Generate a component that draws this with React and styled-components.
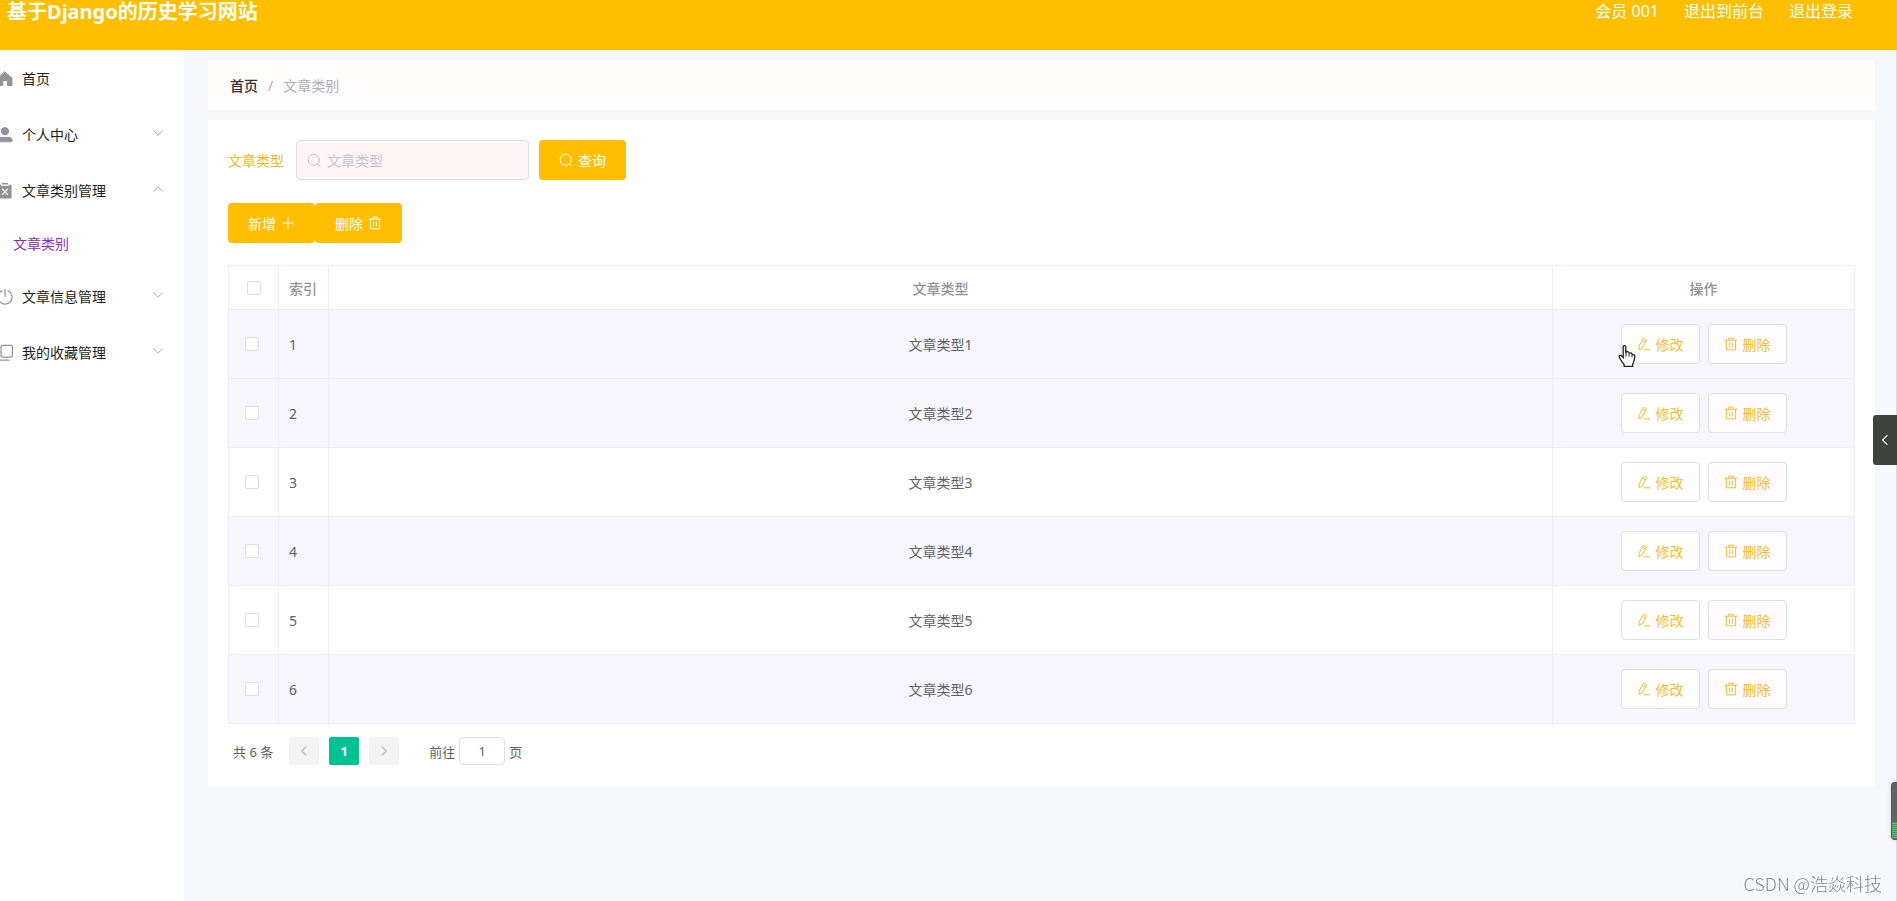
import { useState } from "react";
import styled, { createGlobalStyle } from "styled-components";

const MENU = [
  { label: "首页", icon: "home" },
  { label: "个人中心", icon: "user", arrow: "down" },
  {
    label: "文章类别管理",
    icon: "release",
    arrow: "up",
    children: ["文章类别"],
  },
  { label: "文章信息管理", icon: "power", arrow: "down" },
  { label: "我的收藏管理", icon: "copy", arrow: "down" },
];

const ROWS = [1, 2, 3, 4, 5, 6].map((id) => ({ id, name: `文章类型${id}` }));

const GlobalStyle = createGlobalStyle`
  * {
    box-sizing: border-box;
  }
  body {
    margin: 0;
    background-color: #f6f8fc;
    color: #606266;
    font-size: 14px;
    font-family: "Noto Sans", "Noto Sans CJK SC", sans-serif;
  }
  button,
  input {
    font: inherit;
  }
  a {
    text-decoration: none;
  }
`;

const Page = styled.div`
  min-height: 100vh;
  display: flex;
  flex-direction: column;
`;

const Header = styled.header`
  height: 50px;
  padding: 0 44px 0 7px;
  display: flex;
  justify-content: space-between;
  background-color: #ffbf00;
  color: #fff;
`;

const Title = styled.h1`
  margin: 0;
  font-size: 20px;
  line-height: 24px;
`;

const HeaderNav = styled.nav`
  display: flex;
  gap: 25px;
  font-size: 16px;
  line-height: 22px;
`;

const HeaderLink = styled.a`
  color: #fff;
`;

const Body = styled.div`
  flex: 1;
  display: flex;
  border-right: 1px solid #d9dbe0;
`;

const Sidebar = styled.nav`
  width: 184px;
  flex-shrink: 0;
  overflow: hidden;
  background-color: #fffefe;
`;

const MenuItem = styled.a`
  height: 56px;
  padding-right: 20px;
  display: flex;
  align-items: center;
  color: #1d1d1f;
`;

/* the icons hang over the left edge */
const MenuIcon = styled.span`
  width: 18px;
  height: 18px;
  margin: 2px 8px 0 -4px;
  color: #909399;
`;

const MenuLabel = styled.span`
  flex: 1;
`;

const MenuArrow = styled.span`
  margin-bottom: 3px;
  color: #a6a8ad;
`;

const SubItem = styled.a`
  height: 50px;
  padding-left: 13px;
  display: flex;
  align-items: center;
  color: #8a2bc8;
`;

const Main = styled.main`
  flex: 1;
  min-width: 0;
  padding: 10px 21px 10px 24px;
  display: flex;
  flex-direction: column;
  gap: 10px;
`;

const Breadcrumb = styled.nav`
  height: 50px;
  padding: 0 22px;
  display: flex;
  align-items: center;
  gap: 10px;
  background-color: #fffdfc;
  color: #a8aec0;
`;

const Crumb = styled.a`
  color: #303133;
  font-weight: 500;
`;

const Panel = styled.section`
  padding: 20px 20px 21px;
  background-color: #fff;
`;

const SearchForm = styled.form`
  display: flex;
  align-items: center;
  gap: 10px;
`;

const SearchLabel = styled.label`
  margin-right: 2px;
  color: #f2b91c;
`;

const SearchBox = styled.div`
  width: 233px;
  height: 40px;
  padding: 0 10px;
  display: flex;
  align-items: center;
  gap: 6px;
  border: 1px solid #dcdfe6;
  border-radius: 4px;
  background-color: #fff5f6;
  color: #c0c4cc;
`;

const SearchInput = styled.input`
  flex: 1;
  min-width: 0;
  padding: 0;
  border: none;
  outline: none;
  background: transparent;
  color: #606266;

  &::placeholder {
    color: #c0c4cc;
  }
`;

const Button = styled.button`
  height: 40px;
  width: 87px;
  padding: 0;
  display: inline-flex;
  align-items: center;
  justify-content: center;
  gap: 5px;
  border: none;
  border-radius: 4px;
  background-color: #ffbf00;
  color: #fff;
  cursor: pointer;
`;

const RowButton = styled(Button)`
  width: 79px;
  border: 1px solid #dcdfe6;
  background-color: ${(props) => (props.$danger ? "#fffbfe" : "#fff")};
  color: #f6bd2c;
`;

const Toolbar = styled.div`
  margin: 23px 0 22px;
  display: flex;
`;

const Table = styled.table`
  width: 100%;
  table-layout: fixed;
  border-collapse: collapse;
  border: 1px solid #ebeef5;
`;

const Th = styled.th`
  width: ${(props) => props.$width || "auto"};
  height: 44px;
  padding: 0 10px;
  border: 1px solid #ebeef5;
  color: #909399;
  font-weight: 500;
  text-align: ${(props) => props.$align || "center"};
`;

const Tr = styled.tr`
  background-color: ${(props) => (props.$shaded ? "#f6f6fc" : "#fff")};
`;

const Td = styled.td`
  height: 69px;
  padding: 0 10px;
  border: 1px solid #ebeef5;
  text-align: ${(props) => props.$align || "center"};
`;

const CheckTd = styled(Td)`
  padding: 0 13px 0 10px;
`;

const Checkbox = styled.input`
  appearance: none;
  width: 14px;
  height: 14px;
  display: block;
  margin: 0 auto;
  border: 1px solid #dcdfe6;
  border-radius: 2px;
  background-color: #fff;

  &:checked {
    background-color: #ffbf00;
  }
`;

const Actions = styled.div`
  display: flex;
  justify-content: center;
  gap: 8px;
`;

const Pagination = styled.div`
  padding: 13px 5px 0;
  display: flex;
  align-items: center;
  font-size: 13px;
`;

const Pager = styled.div`
  margin: 0 30px 0 16px;
  display: flex;
  gap: 10px;
`;

const PageButton = styled.button`
  width: 30px;
  height: 28px;
  padding: 0;
  display: flex;
  align-items: center;
  justify-content: center;
  border: none;
  border-radius: 2px;
  background-color: ${(props) => (props.$active ? "#00c292" : "#f4f4f5")};
  color: ${(props) => (props.$active ? "#fff" : "#c0c4cc")};
  font-weight: 700;
`;

const Jump = styled.label`
  display: flex;
  align-items: center;
  gap: 4px;
`;

const JumpInput = styled.input`
  width: 46px;
  height: 28px;
  padding: 0;
  border: 1px solid #dcdfe6;
  border-radius: 4px;
  color: #606266;
  text-align: center;
`;

const DrawerHandle = styled.button`
  position: fixed;
  top: 415px;
  right: 0;
  width: 24px;
  height: 50px;
  padding: 0;
  display: flex;
  align-items: center;
  justify-content: center;
  border: none;
  border-radius: 3px 0 0 3px;
  background-color: #404240;
  color: #fff;
`;

const Meter = styled.div`
  position: fixed;
  top: 782px;
  right: 0;
  width: 6px;
  height: 58px;
  display: flex;
  align-items: flex-end;
  overflow: hidden;
  border: 1px solid #58595a;
  border-right: none;
  border-radius: 4px 0 0 4px;
  background-color: #626364;
  box-shadow: 0 0 4px rgba(0, 0, 0, 0.15);
`;

const MeterFill = styled.div`
  width: 100%;
  height: 17px;
  background: repeating-linear-gradient(#3f9a57 0 1px, #5cc077 1px 2px);
`;

const Watermark = styled.div`
  position: fixed;
  right: 15px;
  bottom: 5px;
  color: #85878a;
  font-size: 18px;
  line-height: 26px;
  font-weight: 300;
  font-family: "Noto Sans CJK SC", sans-serif;
  text-shadow: -1px -1px 0 #fff;
`;

const Pointer = styled.svg`
  position: absolute;
  top: 344px;
  right: 260px;
  width: 20px;
  height: 24px;
  pointer-events: none;
`;

const Svg = styled.svg`
  display: block;
  flex-shrink: 0;
  width: ${(props) => props.$size}px;
  height: ${(props) => props.$size}px;
  fill: none;
  stroke: currentColor;
  stroke-width: ${(props) => props.$weight || 1};
  stroke-linecap: round;
  stroke-linejoin: round;
`;

function Icon({ name, size = 14 }) {
  switch (name) {
    case "home":
      return (
        <Svg viewBox="0 0 18 18" $size={size}>
          <path
            d="M9 2 16 8.2V15.4H11.4V10.6H6.8V15.4H2V8.2Z"
            fill="currentColor"
          />
        </Svg>
      );
    case "user":
      return (
        <Svg viewBox="0 0 18 18" $size={size}>
          <circle cx="9" cy="5.2" r="3.6" fill="currentColor" />
          <path
            d="M2 15.4V14C2 12.2 3.2 11.4 5 11.4H13C14.8 11.4 16 12.4 16 14V15.4Z"
            fill="currentColor"
          />
        </Svg>
      );
    case "release":
      return (
        <Svg viewBox="0 0 18 18" $size={size}>
          <path
            d="M3 3.4H15V16H3ZM6.4 1.6H11.6"
            fill="currentColor"
            strokeWidth="1.2"
          />
          <path d="M5.6 3.4H12.4" stroke="#fff" />
          <path
            d="M6.6 7.2 11.4 12.4M11.4 7.2 6.6 12.4"
            stroke="#fff"
            strokeWidth="1.3"
          />
        </Svg>
      );
    case "power":
      return (
        <Svg viewBox="0 0 18 18" $size={size} $weight={1.2}>
          <path d="M9 1.4V8.4M5.8 2.9A7 7 0 1 0 12.2 2.9" />
        </Svg>
      );
    case "copy":
      return (
        <Svg viewBox="0 0 18 18" $size={size} $weight={1.2}>
          <rect x="5" y="1.4" width="11.4" height="11.8" rx="1.6" />
          <path d="M13 16.2H3.6A1.8 1.8 0 0 1 1.8 14.4V5" />
        </Svg>
      );
    case "search":
      return (
        <Svg viewBox="0 0 14 14" $size={size}>
          <circle cx="6.8" cy="6.8" r="5.6" />
          <path d="M10.8 10.9 12.6 12.8" />
        </Svg>
      );
    case "plus":
      return (
        <Svg viewBox="0 0 14 14" $size={size}>
          <path d="M7 1.4V12.6M1.4 7H12.6" />
        </Svg>
      );
    case "trash":
      return (
        <Svg viewBox="0 0 14 14" $size={size}>
          <path d="M1 3.2H13M4.8 3V1.2H9.2V3M2.4 3.4V12.8H11.6V3.4M5.6 6V10.2M8.4 6V10.2" />
        </Svg>
      );
    case "edit":
      return (
        <Svg viewBox="0 0 14 14" $size={size}>
          <path d="M6.8 1.4 9.6 3 5 11 2 12.6 2 9.6ZM5.6 3.4 8.4 5M7 12.8H12.8" />
        </Svg>
      );
    case "up":
      return (
        <Svg viewBox="0 0 12 12" $size={size}>
          <path d="M1.6 8.2 6 3.8 10.4 8.2" />
        </Svg>
      );
    case "down":
      return (
        <Svg viewBox="0 0 12 12" $size={size}>
          <path d="M1.6 3.8 6 8.2 10.4 3.8" />
        </Svg>
      );
    case "left":
      return (
        <Svg viewBox="0 0 12 12" $size={size} $weight={1.2}>
          <path d="M8 1.6 3.6 6 8 10.4" />
        </Svg>
      );
    case "prev":
      return (
        <Svg viewBox="0 0 12 12" $size={size} $weight={1.6}>
          <path d="M7.8 2 3.8 6 7.8 10" />
        </Svg>
      );
    case "next":
      return (
        <Svg viewBox="0 0 12 12" $size={size} $weight={1.6}>
          <path d="M4.2 2 8.2 6 4.2 10" />
        </Svg>
      );
    default:
      return null;
  }
}

function SideMenu() {
  return (
    <Sidebar>
      {MENU.map((item) => (
        <div key={item.label}>
          <MenuItem href="#">
            <MenuIcon>
              <Icon name={item.icon} size={18} />
            </MenuIcon>
            <MenuLabel>{item.label}</MenuLabel>
            {item.arrow && (
              <MenuArrow>
                <Icon name={item.arrow} size={12} />
              </MenuArrow>
            )}
          </MenuItem>
          {item.children &&
            item.children.map((child) => (
              <SubItem key={child} href="#">
                {child}
              </SubItem>
            ))}
        </div>
      ))}
    </Sidebar>
  );
}

function CategoryTable({ rows }) {
  const [selected, setSelected] = useState([]);

  const toggleAll = () => {
    setSelected(selected.length === rows.length ? [] : rows.map((r) => r.id));
  };
  const toggle = (id) => {
    setSelected(
      selected.includes(id)
        ? selected.filter((item) => item !== id)
        : [...selected, id]
    );
  };

  return (
    <Table>
      <thead>
        <tr>
          <Th $width="50px">
            <Checkbox
              type="checkbox"
              aria-label="全选"
              checked={selected.length === rows.length}
              onChange={toggleAll}
            />
          </Th>
          <Th $width="50px" $align="left">
            索引
          </Th>
          <Th>文章类型</Th>
          <Th $width="302px">操作</Th>
        </tr>
      </thead>
      <tbody>
        {rows.map((row) => (
          // the first row is hovered, even rows are striped
          <Tr key={row.id} $shaded={row.id === 1 || row.id % 2 === 0}>
            <CheckTd>
              <Checkbox
                type="checkbox"
                aria-label={row.name}
                checked={selected.includes(row.id)}
                onChange={() => toggle(row.id)}
              />
            </CheckTd>
            <Td $align="left">{row.id}</Td>
            <Td>{row.name}</Td>
            <Td>
              <Actions>
                <RowButton type="button">
                  <Icon name="edit" />
                  修改
                </RowButton>
                <RowButton type="button" $danger>
                  <Icon name="trash" />
                  删除
                </RowButton>
              </Actions>
            </Td>
          </Tr>
        ))}
      </tbody>
    </Table>
  );
}

function App() {
  const [keyword, setKeyword] = useState("");
  const [page, setPage] = useState("1");

  return (
    <Page>
      <GlobalStyle />
      <Header>
        <Title>基于Django的历史学习网站</Title>
        <HeaderNav>
          <span>会员 001</span>
          <HeaderLink href="#">退出到前台</HeaderLink>
          <HeaderLink href="#">退出登录</HeaderLink>
        </HeaderNav>
      </Header>
      <Body>
        <SideMenu />
        <Main>
          <Breadcrumb>
            <Crumb href="#">首页</Crumb>
            <span>/</span>
            <span>文章类别</span>
          </Breadcrumb>
          <Panel>
            <SearchForm onSubmit={(e) => e.preventDefault()}>
              <SearchLabel htmlFor="keyword">文章类型</SearchLabel>
              <SearchBox>
                <Icon name="search" />
                <SearchInput
                  id="keyword"
                  value={keyword}
                  onChange={(e) => setKeyword(e.target.value)}
                  placeholder="文章类型"
                />
              </SearchBox>
              <Button>
                <Icon name="search" />
                查询
              </Button>
            </SearchForm>
            <Toolbar>
              <Button type="button">
                新增
                <Icon name="plus" />
              </Button>
              <Button type="button">
                删除
                <Icon name="trash" />
              </Button>
            </Toolbar>
            <CategoryTable rows={ROWS} />
            <Pagination>
              <span>共 6 条</span>
              <Pager>
                <PageButton type="button" aria-label="上一页">
                  <Icon name="prev" size={12} />
                </PageButton>
                <PageButton type="button" $active>
                  1
                </PageButton>
                <PageButton type="button" aria-label="下一页">
                  <Icon name="next" size={12} />
                </PageButton>
              </Pager>
              <Jump>
                前往
                <JumpInput
                  value={page}
                  onChange={(e) => setPage(e.target.value)}
                />
                页
              </Jump>
            </Pagination>
          </Panel>
        </Main>
      </Body>
      <DrawerHandle type="button" aria-label="展开">
        <Icon name="left" size={12} />
      </DrawerHandle>
      <Meter>
        <MeterFill />
      </Meter>
      <Watermark>CSDN @浩焱科技</Watermark>
      <Pointer viewBox="0 0 20 24">
        <path
          d="M6.2 2.2C7.2 1 8.8 1.6 8.8 3V9L9.6 7.4 11.8 8.2 12.6 9.2 14.6 9.2 15.4 10.6C17 10.4 17.8 11.2 17.8 12.4 17.8 16 16.4 18.6 15.6 20.6V22.4H7.2V20.6C5 18.4 3.4 15.6 2 12.8 2 11 4 11 5.2 12.6L6.2 13.6Z"
          fill="#fff"
          stroke="#222"
          strokeWidth="1.3"
        />
        <path d="M9 9V12.6M12 9.4V12.6M15 10.6V13" stroke="#222" />
      </Pointer>
    </Page>
  );
}

export default App;
